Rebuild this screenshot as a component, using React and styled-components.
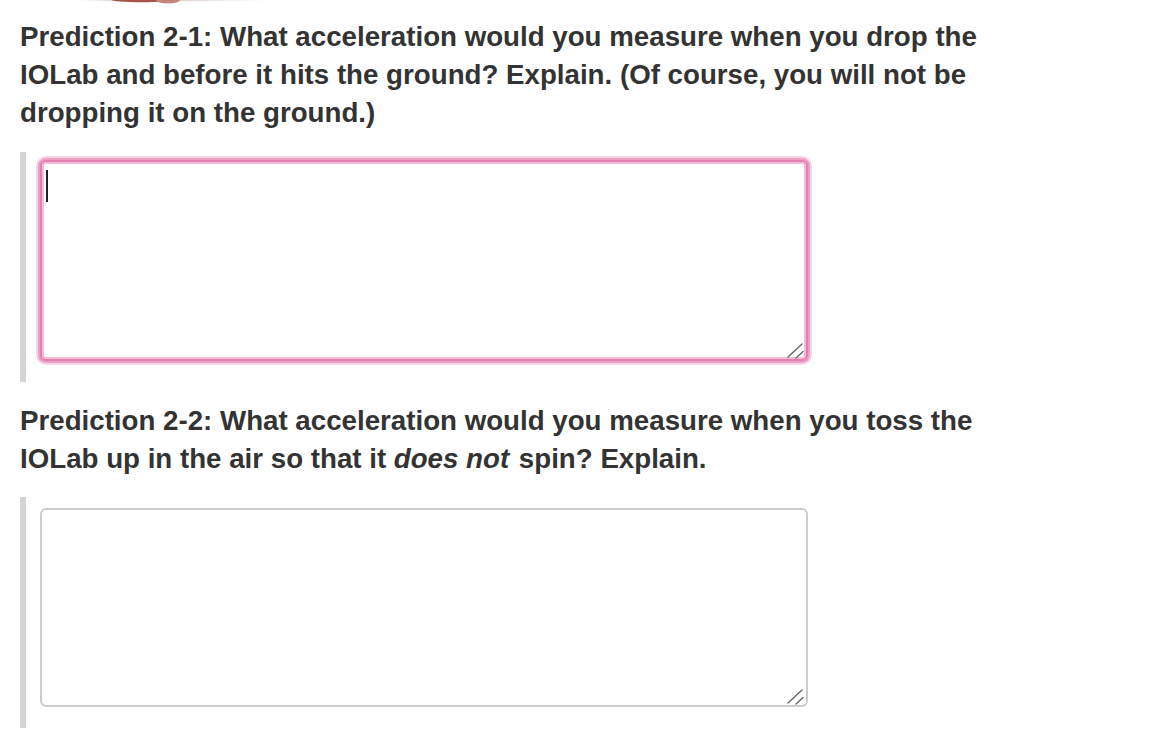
import React from 'react';
import styled, { createGlobalStyle, css } from 'styled-components';

const GlobalStyle = createGlobalStyle`
  html, body {
    margin: 0;
    padding: 0;
    background: #ffffff;
  }
  body {
    font-family: "Liberation Sans", Arial, Helvetica, sans-serif;
    color: #333333;
  }
`;

const Page = styled.main`
  padding: 0 20px;
  width: 1166px;
  box-sizing: border-box;
  overflow: hidden;
`;

const Decor = styled.svg`
  display: block;
  width: 300px;
  height: 4px;
`;

const Question = styled.h3`
  margin: ${(p) => p.$gap}px 0 0;
  max-width: 1000px;
  font-size: 27.7px;
  line-height: 38px;
  font-weight: 700;
  color: #333333;

  em {
    font-style: italic;
    padding-right: 2px;
  }
`;

const Answer = styled.div`
  margin-top: ${(p) => p.$gap}px;
  border-left: 6px solid #d4d4d4;
  padding: ${(p) => p.$top}px 0 21px 14px;
`;

const Field = styled.div`
  position: relative;
  width: 768px;
`;

const TextBox = styled.textarea`
  display: block;
  box-sizing: border-box;
  width: 768px;
  height: ${(p) => p.$height}px;
  margin: 0;
  padding: 8px 10px;
  border: 2px solid #cccccc;
  border-radius: 6px;
  background: #ffffff;
  font-family: "Liberation Sans", Arial, sans-serif;
  font-size: 24px;
  color: #333333;
  resize: none;
  outline: none;

  ${(p) =>
    p.$focused &&
    css`
      border-color: #e17fae;
      box-shadow: 0 0 0 2px #eaa0c4, 0 0 0 4px #f8d5e5, inset 0 0 0 2px #f3bcd6;
    `}
`;

const Caret = styled.span`
  position: absolute;
  left: 6px;
  top: 10px;
  width: 2px;
  height: 32px;
  background: #222222;
  pointer-events: none;
`;

const Grip = styled.svg`
  position: absolute;
  right: 2px;
  bottom: 1px;
  width: 20px;
  height: 20px;
  pointer-events: none;
`;

const ResizeGrip = () => (
  <Grip viewBox="0 0 20 20" aria-hidden="true">
    <path d="M2 17 L16 4 M10 18 L17 11.5" stroke="#666666" strokeWidth="1.4" strokeLinecap="round" fill="none" />
  </Grip>
);

export default function App() {
  return (
    <>
      <GlobalStyle />
      <Page>
        <Decor viewBox="0 0 300 4" aria-hidden="true">
          <defs>
            <linearGradient id="fade" x1="0" x2="1" y1="0" y2="0">
              <stop offset="0" stopColor="#c9c9c9" stopOpacity="0" />
              <stop offset="0.3" stopColor="#c9a9a6" />
              <stop offset="1" stopColor="#d9d9d9" stopOpacity="0" />
            </linearGradient>
          </defs>
          <rect x="60" y="0" width="190" height="1.2" fill="url(#fade)" />
          <ellipse cx="122" cy="0" rx="30" ry="2.2" fill="#a8524c" />
          <ellipse cx="148" cy="0" rx="12" ry="3.4" fill="#c7847c" />
        </Decor>

        <Question $gap={14}>
          Prediction 2-1: What acceleration would you measure when you drop the IOLab and before it
          hits the ground? Explain. (Of course, you will not be dropping it on the ground.)
        </Question>
        <Answer $gap={20} $top={8}>
          <Field>
            <TextBox $focused $height={201} aria-label="Prediction 2-1" />
            <Caret />
            <ResizeGrip />
          </Field>
        </Answer>

        <Question $gap={20}>
          Prediction 2-2: What acceleration would you measure when you toss the IOLab up in the air
          so that it <em>does not</em> spin? Explain.
        </Question>
        <Answer $gap={19} $top={11}>
          <Field>
            <TextBox $height={199} aria-label="Prediction 2-2" />
            <ResizeGrip />
          </Field>
        </Answer>
      </Page>
    </>
  );
}
